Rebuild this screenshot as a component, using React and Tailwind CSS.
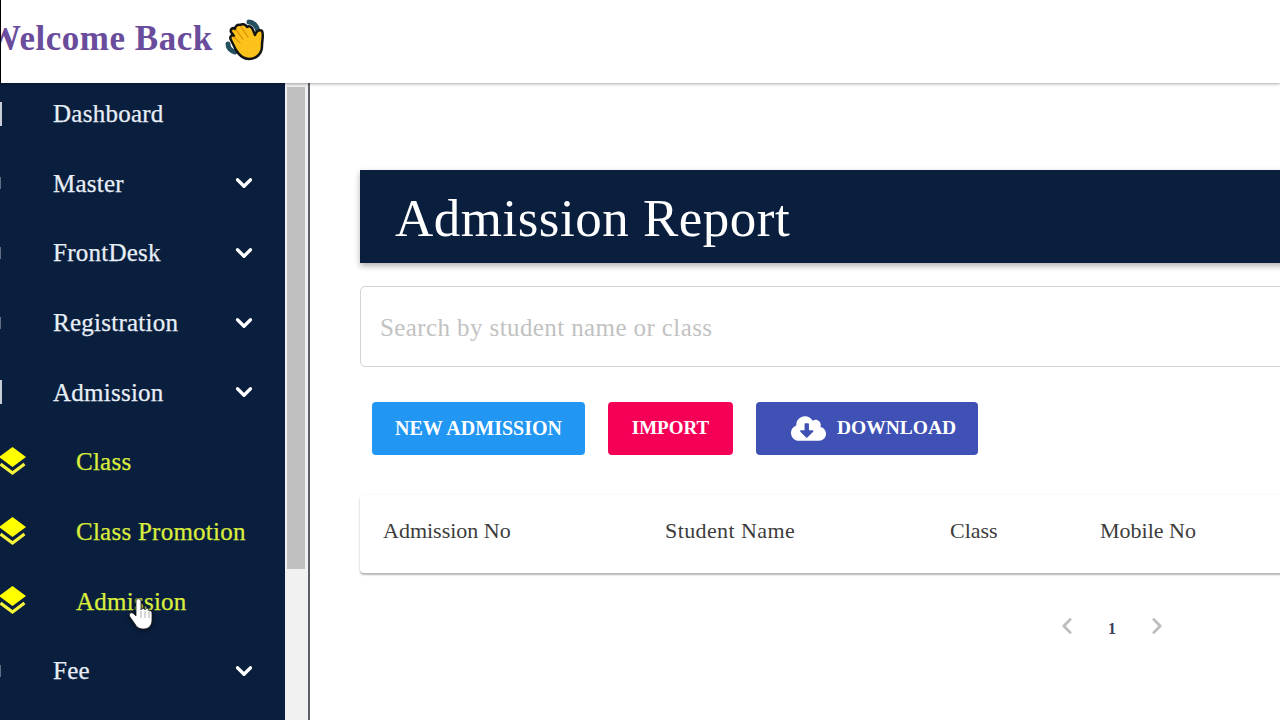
import React from "react";
import { FaCloudDownloadAlt } from "react-icons/fa";
import { ChevronDown, ChevronLeft, ChevronRight } from "lucide-react";

const serif = "font-['Liberation_Serif',serif]";

function Layers() {
  return (
    <svg width="26" height="30" viewBox="0 0 26 30" className="absolute left-0 top-[calc(50%-15px)]">
      <path d="M12.5 0 L26 10 L12.5 20 L-1 10 Z" fill="#ffff00" />
      <path d="M0.5 17 L12.5 26 L24.5 17" fill="none" stroke="#f4f43a" strokeWidth="3.2" />
    </svg>
  );
}

function Wave() {
  return (
    <svg width="60" height="55" viewBox="0 0 60 55" className="ml-[3px] -mt-[8px]">
      <path d="M33 12c4 0 8 4 9 9" fill="none" stroke="#25505f" strokeWidth="5" strokeLinecap="round" />
      <path d="M12 34c0 4 3 7 7 8" fill="none" stroke="#25505f" strokeWidth="5" strokeLinecap="round" />
      <path
        d="M24 15C27 13 30 15 31 17C33 15 36 17 37 20L39 25C40 21 44 19 46 21C48 24 46 30 46 36C46 44 40 49 33 49C27 49 23 45 20 40L15 30C13 27 16 24 18 26L15 22C14 19 17 17 19 19C19 16 22 14 24 15Z"
        fill="#fcc21b"
        stroke="#141414"
        strokeWidth="2.5"
        strokeLinejoin="round"
      />
      <path d="M20 20L27 29M25 17L32 27M18 27L24 33" fill="none" stroke="#e39a08" strokeWidth="1.5" strokeLinecap="round" />
    </svg>
  );
}

function Hand() {
  return (
    <svg width="26" height="34" viewBox="0 0 26 34" className="absolute left-[127px] top-[597px] drop-shadow-[0_1px_2px_rgba(0,0,0,0.6)]">
      <path
        d="M9 4c0-3 5-3 5 0v9c0-2 4-2 4 0 0-2 4-2 4 1 1-1 3 0 3 2v7c0 5-3 9-8 9-4 0-7-1-9-5L3 20c-2-3 1-6 4-3l2 2z"
        fill="#fff"
        stroke="#1c1c1c"
        strokeWidth="0.8"
      />
      <path d="M14 14v7M18 14v7M22 15v6" stroke="#9a9a9a" strokeWidth="0.8" />
    </svg>
  );
}

function Row({ label, chevron, sub, mark }) {
  return (
    <div className={`relative h-[69.67px] flex items-center ${sub ? "pl-[76px] text-[#dcee3c]" : "pl-[53px] text-[#e8eef6]"}`}>
      {sub && <Layers />}
      {mark === "long" && <span className="absolute left-0 top-1/2 -translate-y-1/2 w-[2px] h-[24px] bg-[#c8ced8]" />}
      {mark === "faint" && <span className="absolute left-0 top-1/2 -translate-y-1/2 w-[1px] h-[12px] bg-[#5f6e84]" />}
      <span className="text-[25px] tracking-[0.25px] [-webkit-text-stroke:0.25px_currentColor]">{label}</span>
      {chevron && <ChevronDown className="absolute left-[231px] text-white" size={26} strokeWidth={3} />}
    </div>
  );
}

const rows = [
  { label: "Dashboard", mark: "long" },
  { label: "Master", chevron: true, mark: "faint" },
  { label: "FrontDesk", chevron: true, mark: "faint" },
  { label: "Registration", chevron: true, mark: "faint" },
  { label: "Admission", chevron: true, mark: "long" },
  { label: "Class", sub: true },
  { label: "Class Promotion", sub: true },
  { label: "Admission", sub: true },
  { label: "Fee", chevron: true, mark: "faint" },
];

const btn = "h-[53px] rounded-[4px] font-bold text-white";

export default function App() {
  return (
    <div className={`relative w-[1280px] h-[720px] overflow-hidden bg-white ${serif}`}>
      <header className="h-[83px] border-l border-black flex items-center relative z-10 shadow-[0_1px_3px_rgba(0,0,0,0.35)] bg-white overflow-hidden">
        <div className="flex items-center -ml-[15px]">
          <span className="text-[35px] font-bold text-[#6a4c9c] tracking-[0.5px] -mt-[4px]">Welcome Back</span>
          <Wave />
        </div>
      </header>
      <div className="flex h-[637px]">
        <aside className="w-[285px] shrink-0 bg-[#0a1f3e] overflow-hidden">
          <div className="-mt-[4px]">
            {rows.map((r, i) => (
              <Row key={i} {...r} />
            ))}
          </div>
        </aside>
        <div className="w-[25px] shrink-0 bg-[#f1f1f1] pt-[4px] pl-[2px] pr-[3px] border-r-2 border-[#5c6068]">
          <div className="h-[482px] bg-[#c0c0c0]" />
        </div>
        <main className="flex-1 pl-[50px] pt-[87px] overflow-hidden">
          <div className="w-[1000px] h-[93px] bg-[#0a1f3e] flex items-center pl-[35px] shadow-[0_3px_6px_rgba(0,0,0,0.3)]">
            <h1 className="text-[53px] text-white tracking-[0.5px] pt-[5px]">Admission Report</h1>
          </div>
          <div className="mt-[23px] w-[1000px] h-[81px] rounded-[5px] border border-[#d4d4d4] flex items-center pl-[19px] pt-[2px] text-[25px] tracking-[0.4px] text-[#c2c2c2]">
            Search by student name or class
          </div>
          <div className="mt-[35px] ml-[12px] flex gap-[23px]">
            <button className={`${btn} w-[213px] bg-[#2196f3] text-[20px] pb-[2px]`}>NEW ADMISSION</button>
            <button className={`${btn} w-[125px] bg-[#f50057] text-[19px]`}>IMPORT</button>
            <button className={`${btn} w-[222px] bg-[#3f51b5] text-[19.5px] flex items-center pl-[35px] gap-[11px]`}>
              <FaCloudDownloadAlt size={35} color="#fff" />
              <span className="-mt-[2px]">DOWNLOAD</span>
            </button>
          </div>
          <div className="mt-[40px] w-[1000px] h-[78px] rounded-[4px] bg-white shadow-[0_2px_2px_rgba(0,0,0,0.28),0_0_3px_rgba(0,0,0,0.06)] flex items-center pl-[23px] pb-[8px] text-[22px] text-[#3c3c3c]">
            <span className="w-[282px]">Admission No</span>
            <span className="w-[285px] tracking-[0.4px]">Student Name</span>
            <span className="w-[150px]">Class</span>
            <span>Mobile No</span>
          </div>
          <div className="mt-[38px] ml-[694px] w-[116px] flex items-center justify-between text-[#bdbdbd]">
            <ChevronLeft size={26} strokeWidth={2.5} />
            <span className="text-[16px] font-bold text-[#3c4458] mt-[6px]">1</span>
            <ChevronRight size={26} strokeWidth={2.5} />
          </div>
        </main>
      </div>
      <Hand />
    </div>
  );
}
